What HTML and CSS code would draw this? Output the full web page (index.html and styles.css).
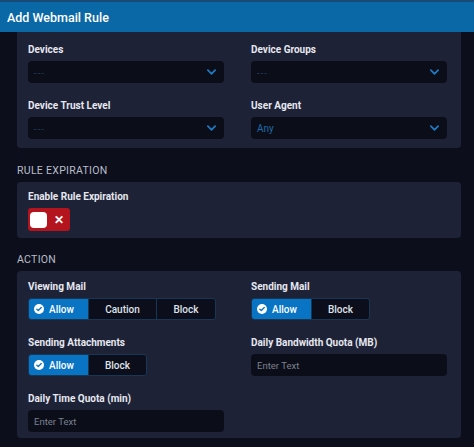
FILE: index.html
```html
<!DOCTYPE html>
<html>
<head>
<meta charset="utf-8">
<link rel="stylesheet" href="styles.css">
</head>
<body>
<div class="page">
  <header class="hdr">Add Webmail Rule</header>
  <main class="content">
    <section class="card card-top">
      <div class="grid">
        <div class="field">
          <label class="lbl">Devices</label>
          <div class="select"><span class="ph">---</span><svg class="chev" viewBox="0 0 10 6"><path d="M1 1l4 4 4-4" /></svg></div>
        </div>
        <div class="field">
          <label class="lbl">Device Groups</label>
          <div class="select"><span class="ph">---</span><svg class="chev" viewBox="0 0 10 6"><path d="M1 1l4 4 4-4" /></svg></div>
        </div>
        <div class="field">
          <label class="lbl">Device Trust Level</label>
          <div class="select"><span class="ph">---</span><svg class="chev" viewBox="0 0 10 6"><path d="M1 1l4 4 4-4" /></svg></div>
        </div>
        <div class="field">
          <label class="lbl">User Agent</label>
          <div class="select"><span class="val">Any</span><svg class="chev" viewBox="0 0 10 6"><path d="M1 1l4 4 4-4" /></svg></div>
        </div>
      </div>
    </section>

    <h2 class="sec">RULE EXPIRATION</h2>
    <section class="card card-sm">
      <div class="field">
        <label class="lbl">Enable Rule Expiration</label>
        <div class="toggle"><span class="knob"></span><span class="x">✕</span></div>
      </div>
    </section>

    <h2 class="sec sec2">ACTION</h2>
    <section class="card card-sm card-last">
      <div class="grid">
        <div class="field">
          <label class="lbl">Viewing Mail</label>
          <div class="seg">
            <span class="opt on w59"><svg class="ok" viewBox="0 0 12 12"><circle cx="6" cy="6" r="6" fill="#fff"/><path d="M3.4 6.2l1.8 1.7 3.5-3.6" fill="none" stroke="#0a74c4" stroke-width="1.6" stroke-linecap="round" stroke-linejoin="round"/></svg>Allow</span>
            <span class="opt w68">Caution</span>
            <span class="opt w59">Block</span>
          </div>
        </div>
        <div class="field">
          <label class="lbl">Sending Mail</label>
          <div class="seg">
            <span class="opt on w59"><svg class="ok" viewBox="0 0 12 12"><circle cx="6" cy="6" r="6" fill="#fff"/><path d="M3.4 6.2l1.8 1.7 3.5-3.6" fill="none" stroke="#0a74c4" stroke-width="1.6" stroke-linecap="round" stroke-linejoin="round"/></svg>Allow</span>
            <span class="opt w58">Block</span>
          </div>
        </div>
        <div class="field">
          <label class="lbl">Sending Attachments</label>
          <div class="seg">
            <span class="opt on w59"><svg class="ok" viewBox="0 0 12 12"><circle cx="6" cy="6" r="6" fill="#fff"/><path d="M3.4 6.2l1.8 1.7 3.5-3.6" fill="none" stroke="#0a74c4" stroke-width="1.6" stroke-linecap="round" stroke-linejoin="round"/></svg>Allow</span>
            <span class="opt w58">Block</span>
          </div>
        </div>
        <div class="field">
          <label class="lbl">Daily Bandwidth Quota (MB)</label>
          <div class="input">Enter Text</div>
        </div>
        <div class="field">
          <label class="lbl">Daily Time Quota (min)</label>
          <div class="input">Enter Text</div>
        </div>
      </div>
    </section>
  </main>
</div>
</body>
</html>
```
FILE: styles.css
```css
* { box-sizing: border-box; margin: 0; padding: 0; }
html, body { background: #0c0f1b; }
body {
  font-family: Roboto, "Liberation Sans", sans-serif;
  color: #e6e8ee;
  width: 474px;
  height: 447px;
  overflow: hidden;
}
.page { display: flex; flex-direction: column; }
.hdr {
  height: 32px;
  border-top: 2px solid #184a75;
  background: #0b68a6;
  color: #ffffff;
  font-size: 12.5px;
  font-weight: 500;
  padding-left: 7px;
  display: flex;
  align-items: center;
}
.content {
  padding: 0 13px 0 17px;
  display: flex;
  flex-direction: column;
}
.card {
  background: #1e2237;
  border-radius: 4px;
  padding: 8px 14px 7px 11px;
}
.card-top {
  border-radius: 0 0 4px 4px;
  padding: 11px 14px 9px 11px;
}
.card-last { padding-top: 9px; padding-bottom: 6px; }
.grid {
  display: grid;
  grid-template-columns: 196px 196px;
  column-gap: 27px;
  row-gap: 16px;
}
.field { display: flex; flex-direction: column; gap: 4px; }
.lbl {
  font-size: 10px;
  line-height: 14px;
  font-weight: 700;
  color: #e6e8ef;
}
.select, .input {
  height: 22px;
  background: #0b0e19;
  border-radius: 4px;
  display: flex;
  align-items: center;
  justify-content: space-between;
  padding: 0 8px 0 6px;
  font-size: 9.5px;
}
.ph { color: #24425f; letter-spacing: 1px; }
.val { color: #1f6aa8; font-size: 10px; }
.chev {
  width: 9px;
  height: 6px;
  fill: none;
  stroke: #1f78c1;
  stroke-width: 2;
  stroke-linecap: round;
  stroke-linejoin: round;
}
.input { color: #7b8090; }
.sec {
  font-size: 10.5px;
  line-height: 14px;
  font-weight: 400;
  color: #b9bdca;
  letter-spacing: 0.3px;
  margin: 16px 0 4px 0;
}
.sec2 { margin-top: 15px; }
.toggle {
  width: 42px;
  height: 23px;
  background: #b3141d;
  border-radius: 3px;
  display: flex;
  align-items: center;
  padding-left: 2px;
  gap: 7px;
}
.knob {
  width: 17px;
  height: 16px;
  background: #ffffff;
  border-radius: 4px;
}
.x { color: #ffffff; font-size: 12px; font-weight: 700; line-height: 1; }
.seg {
  display: flex;
  height: 22px;
  align-self: flex-start;
  border: 1px solid #173754;
  border-radius: 3px;
  overflow: hidden;
  background: #0c0f1b;
}
.opt {
  display: flex;
  align-items: center;
  justify-content: center;
  font-size: 10px;
  font-weight: 500;
  color: #dfe2ea;
  border-left: 1px solid #173754;
}
.opt:first-child { border-left: none; }
.opt.on {
  background: #0a74c4;
  color: #ffffff;
  justify-content: flex-start;
  padding-left: 5px;
  gap: 5px;
}
.ok { width: 10px; height: 10px; }
.w59 { width: 59px; }
.w58 { width: 58px; }
.w68 { width: 68px; }
```
